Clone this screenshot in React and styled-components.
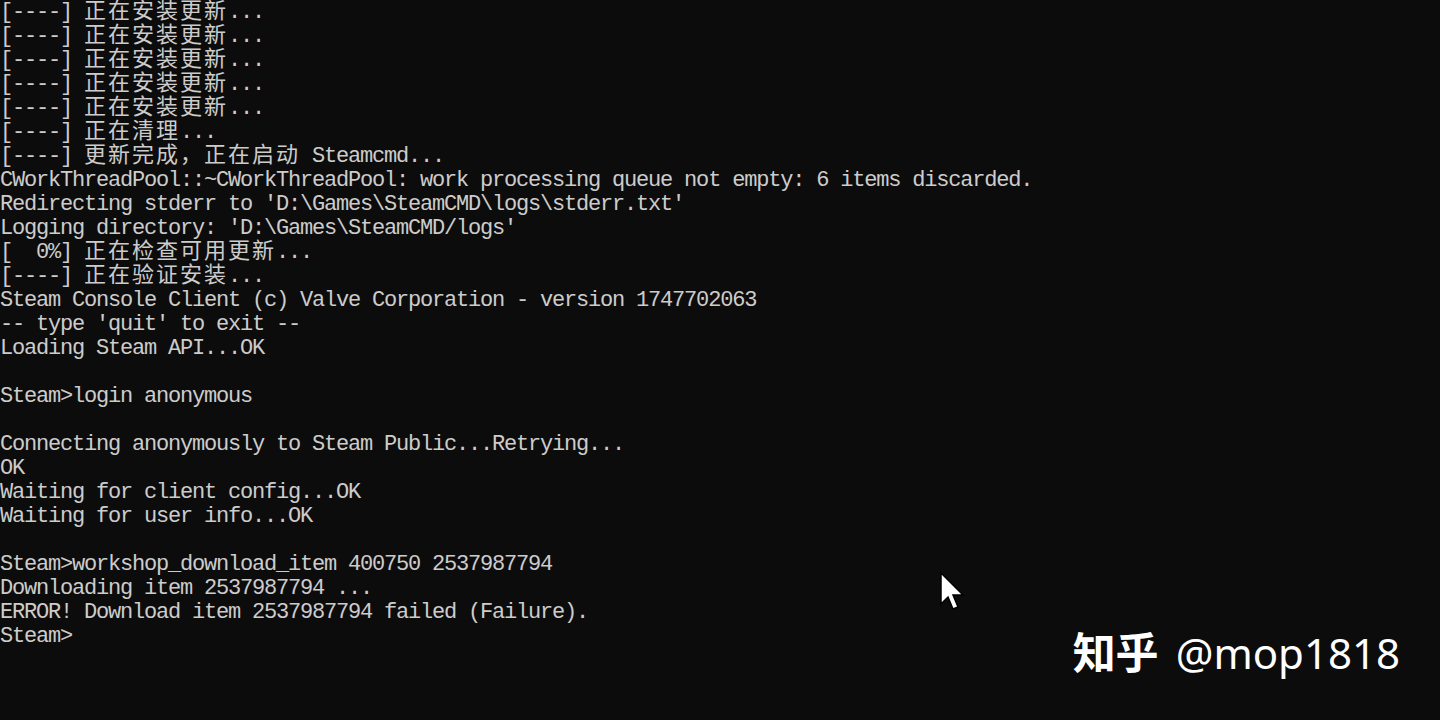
import React from "react";
import styled, { createGlobalStyle } from "styled-components";

const Global = createGlobalStyle`
  html, body { margin: 0; padding: 0; background: #0c0c0c; }
  body { width: 1440px; height: 720px; overflow: hidden; }
`;

const Screen = styled.div`
  position: relative;
  width: 1440px;
  height: 720px;
  background: #0c0c0c;
  overflow: hidden;
`;

const Console = styled.div`
  display: flex;
  flex-direction: column;
  padding-top: 1px;
  color: #cccccc;
  font-family: "Liberation Mono", "DejaVu Sans Mono", monospace;
  font-size: 22px;
  letter-spacing: -1.2px;
`;

const Line = styled.div`
  height: 24px;
  line-height: 24px;
  white-space: pre;
`;

const Cjk = styled.span`
  font-family: "Noto Sans CJK SC", sans-serif;
  font-size: 22px;
  line-height: 0;
  letter-spacing: 2px;
  font-weight: 400;
`;

const Watermark = styled.div`
  position: absolute;
  right: 40px;
  bottom: 37px;
  display: flex;
  align-items: baseline;
  gap: 17px;
  color: #ffffff;
  font-family: "Noto Sans CJK SC", "Noto Sans", sans-serif;
  font-size: 43px;
  line-height: 60px;
`;

const Brand = styled.span`
  font-weight: 700;
`;

const Handle = styled.span`
  font-family: "Noto Sans", "Open Sans", sans-serif;
  font-weight: 400;
  font-size: 42px;
`;

const Pointer = styled.svg`
  position: absolute;
  left: 939px;
  top: 571px;
`;

const cjkRe = /([\u3000-\u303f\u4e00-\u9fff\uff00-\uffef]+)/;

function renderText(text) {
  return text.split(cjkRe).map((part, i) =>
    cjkRe.test(part) ? <Cjk key={i}>{part}</Cjk> : <React.Fragment key={i}>{part}</React.Fragment>
  );
}

const lines = [
  "[----] 正在安装更新...",
  "[----] 正在安装更新...",
  "[----] 正在安装更新...",
  "[----] 正在安装更新...",
  "[----] 正在安装更新...",
  "[----] 正在清理...",
  "[----] 更新完成，正在启动 Steamcmd...",
  "CWorkThreadPool::~CWorkThreadPool: work processing queue not empty: 6 items discarded.",
  "Redirecting stderr to 'D:\\Games\\SteamCMD\\logs\\stderr.txt'",
  "Logging directory: 'D:\\Games\\SteamCMD/logs'",
  "[  0%] 正在检查可用更新...",
  "[----] 正在验证安装...",
  "Steam Console Client (c) Valve Corporation - version 1747702063",
  "-- type 'quit' to exit --",
  "Loading Steam API...OK",
  "",
  "Steam>login anonymous",
  "",
  "Connecting anonymously to Steam Public...Retrying...",
  "OK",
  "Waiting for client config...OK",
  "Waiting for user info...OK",
  "",
  "Steam>workshop_download_item 400750 2537987794",
  "Downloading item 2537987794 ...",
  "ERROR! Download item 2537987794 failed (Failure).",
  "Steam>",
];

export default function App() {
  return (
    <Screen>
      <Global />
      <Console>
        {lines.map((l, i) => (
          <Line key={i}>{l ? renderText(l) : " "}</Line>
        ))}
      </Console>
      <Pointer width="32" height="46" viewBox="0 0 32 46">
        <path
          d="M2 2 L2 33 L9 26 L14 38 L19 36 L14 24 L24 24 Z"
          fill="#ffffff"
          stroke="#000000"
          strokeWidth="1.5"
          strokeLinejoin="miter"
        />
      </Pointer>
      <Watermark>
        <Brand>知乎</Brand>
        <Handle>@mop1818</Handle>
      </Watermark>
    </Screen>
  );
}
